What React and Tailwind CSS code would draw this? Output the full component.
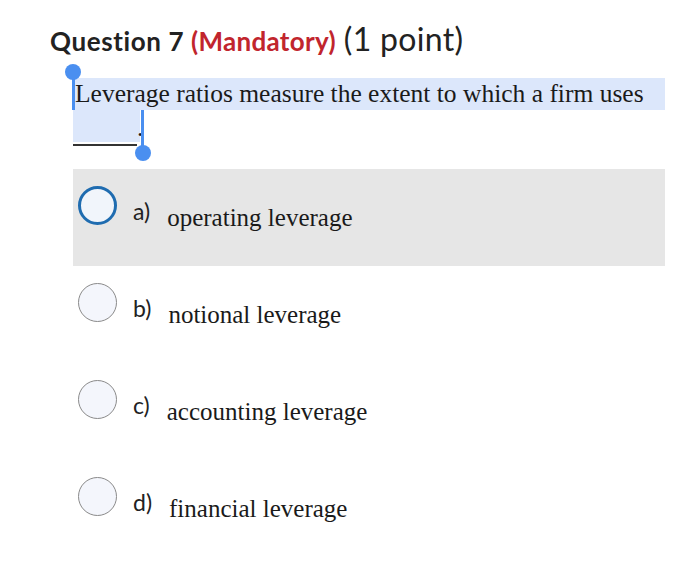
import React from 'react';

const options = [
  { key: 'a', text: 'operating leverage', selected: true },
  { key: 'b', text: 'notional leverage' },
  { key: 'c', text: 'accounting leverage' },
  { key: 'd', text: 'financial leverage' },
];

const serif = "font-['Liberation_Serif','Times_New_Roman',serif]";
const sans = "font-['Lato','Noto_Sans',sans-serif]";

const Handle = ({ className }) => (
  <div className={`absolute w-[16px] h-[16px] rounded-full bg-[#4a8ff0] ${className}`} />
);

const Option = ({ option }) => (
  <div
    className={`flex items-start h-[97px] pl-[5px] pt-[17px] ${
      option.selected ? 'bg-[#e6e6e6]' : ''
    }`}
  >
    <div
      className={`shrink-0 w-[39px] h-[39px] rounded-full ${
        option.selected
          ? 'border-[3px] border-[#1f6cb0] bg-[#f1f5fb]'
          : 'border-[1.5px] border-[#8a8a8a] bg-[#f4f6fc]'
      }`}
    />
    <span className={`ml-[16px] mt-[14px] text-[23px] leading-[23px] text-[#222] ${sans}`}>
      {option.key})
    </span>
    <span className={`ml-[17px] mt-[19px] text-[25px] leading-[25px] text-[#1a1a1a] ${serif}`}>
      {option.text}
    </span>
  </div>
);

export default function App() {
  return (
    <div className="w-[700px] h-[569px] bg-white overflow-hidden">
      <h1 className={`flex items-baseline pl-[50px] pt-[22px] h-[54px] text-[#222] ${sans}`}>
        <span className="text-[26px] leading-[34px] tracking-[0.6px] font-bold whitespace-pre">Question 7 </span>
        <span className="text-[26px] leading-[34px] tracking-[0.3px] font-bold text-[#c1252d]">(Mandatory)</span>
        <span className="ml-[8px] text-[32px] leading-[34px] tracking-[0.3px]">(1 point)</span>
      </h1>

      <div className="ml-[73px] w-[592px]">
        {/* question text with the text selection */}
        <div className={`relative mt-[24px] text-[25.5px] text-[#1a1a1a] ${serif}`}>
          <div className="h-[32px] leading-[32px] pl-[2px] bg-[#dce7fb] whitespace-nowrap">
            Leverage ratios measure the extent to which a firm uses
          </div>
          <div className="w-[67px] h-[32px] leading-[36px] pl-[64px] bg-[#dce7fb]">.</div>
          <div className="w-[64px] h-[1.5px] mt-[2px] bg-[#333]" />

          <div className="absolute left-[-1px] top-[-6px] w-[3px] h-[38px] bg-[#4a8ff0]" />
          <Handle className="left-[-8px] top-[-14px]" />
          <div className="absolute left-[68px] top-[32px] w-[3px] h-[40px] bg-[#4a8ff0]" />
          <Handle className="left-[62px] top-[67px]" />
        </div>

        <div className="mt-[23px]">
          {options.map((option) => (
            <Option key={option.key} option={option} />
          ))}
        </div>
      </div>
    </div>
  );
}
